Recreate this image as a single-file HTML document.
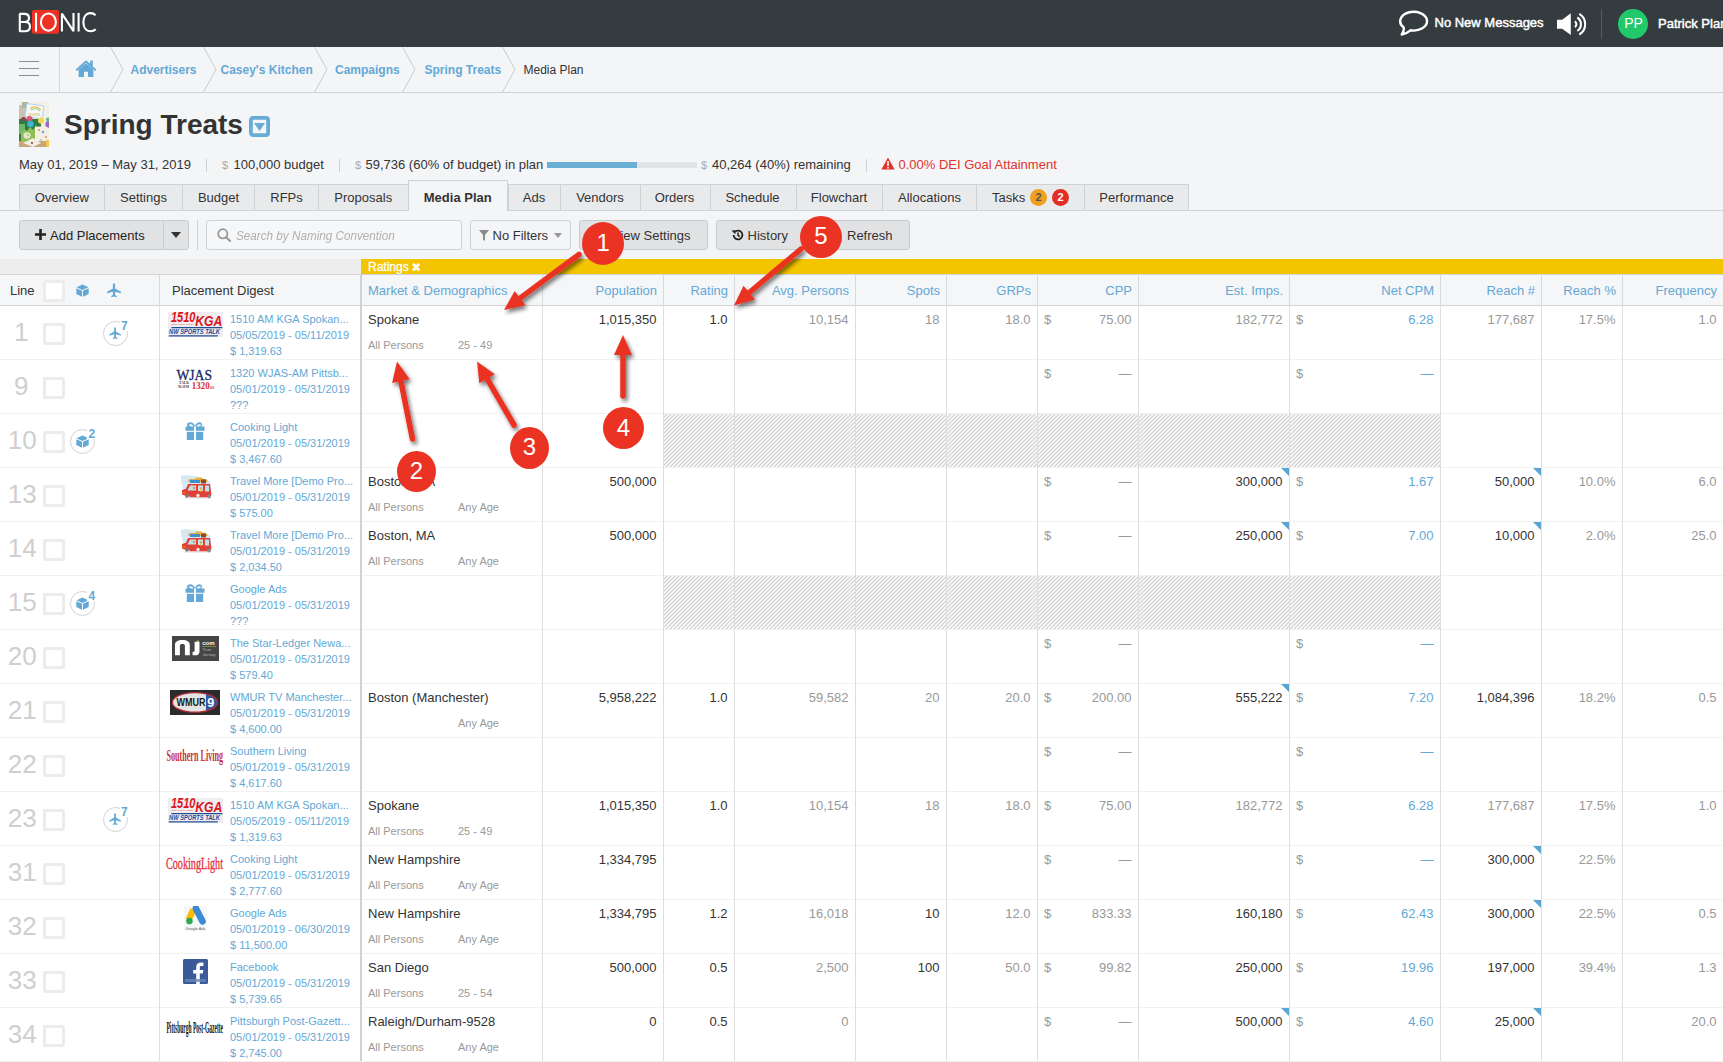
<!DOCTYPE html>
<html><head><meta charset="utf-8"><style>
html,body{margin:0;padding:0}
body{width:1723px;height:1062px;overflow:hidden;position:relative;background:#f4f5f7;font-family:"Liberation Sans",sans-serif}
.r{position:absolute}
.t{position:absolute;white-space:nowrap}
</style></head><body>
<div class="r" style="left:0px;top:0px;width:1723px;height:47px;background:#353c40"></div>
<svg class="r" style="left:0;top:0" width="110" height="47" viewBox="0 0 110 47">
<rect x="32" y="10" width="27" height="23.7" rx="2" fill="#ee3124"/>
<g fill="none" stroke="#fff" stroke-width="2.1" stroke-linejoin="bevel">
<path d="M19.8 31.2V13.9h4.6c3.2 0 4.6 1.6 4.6 4.1 0 2.4-1.6 4-4.6 4h-4.6 5c3.4 0 5.2 1.7 5.2 4.4 0 2.9-1.9 4.8-5.3 4.8z"/>
<path d="M36 12.9v18.6"/>
<ellipse cx="48.4" cy="22.1" rx="7.5" ry="8.6"/>
<path d="M61.9 31.5V13.6l11.6 17.6V12.9"/>
<path d="M78.6 12.9v18.6"/>
<path d="M95.6 15.2c-1.3-1.3-3-2.1-5-2.1-4.6 0-7.2 4-7.2 9.1 0 5.2 2.6 9.1 7.2 9.1 2.1 0 3.8-.8 5.1-2.1"/>
</g></svg>
<svg class="r" style="left:1398px;top:9px" width="33" height="28" viewBox="0 0 33 28"><path d="M12.5 21.3A13.4 9.4 0 1 0 5.6 18.4C6.2 20.5 5.5 23 3.8 25.5 7.2 25 10 23.4 12.5 21.3z" fill="none" stroke="#fff" stroke-width="2.4" stroke-linejoin="round"/></svg>
<div class="t" style="left:1434.50px;top:16.20px;font-size:13px;line-height:13px;color:#fff;-webkit-text-stroke:0.45px #fff">No New Messages</div>
<svg class="r" style="left:1550px;top:5px" width="40" height="36" viewBox="1550 5 40 36"><path d="M1557 19.7h5.2l8.6-6.4v21.7l-8.6-6.2H1557z" fill="#fff"/>
<g fill="none" stroke="#fff" stroke-width="2.1"><path d="M1574.9 21.3a3.6 3.6 0 0 1 0 5.8"/><path d="M1577.3 17.5a8 8 0 0 1 0 13.4"/><path d="M1579.3 13.9a12 12 0 0 1 0 20.6"/></g></svg>
<div class="r" style="left:1601px;top:9px;width:1px;height:30px;background:#555b60"></div>
<div class="r" style="left:1618px;top:9px;width:30px;height:30px;border-radius:50%;background:#21c96b"></div>
<div class="t" style="left:1333.50px;width:600px;text-align:center;top:15.95px;font-size:14px;line-height:14px;color:#fff;">PP</div>
<div class="t" style="left:1658.00px;top:16.50px;font-size:13px;line-height:13px;color:#fff;-webkit-text-stroke:0.45px #fff">Patrick Plan</div>
<div class="r" style="left:0px;top:47px;width:1723px;height:45px;background:#f4f5f7"></div>
<div class="r" style="left:0px;top:92px;width:1723px;height:1px;background:#cfd1d3"></div>
<div class="r" style="left:59px;top:47px;width:1px;height:45px;background:#d6d8da"></div>
<div class="r" style="left:19px;top:61px;width:20px;height:1px;background:#8c8c8c"></div>
<div class="r" style="left:19px;top:68px;width:20px;height:1px;background:#8c8c8c"></div>
<div class="r" style="left:19px;top:75px;width:20px;height:1px;background:#8c8c8c"></div>
<svg class="r" style="left:75px;top:59px" width="22" height="19" viewBox="0 0 22 19"><path d="M11 1.2L0.6 10.6l1.3 1.4L11 3.8l9.1 8.2 1.3-1.4-3.6-3.2V1.4h-2.6v3.4z" fill="#63a8d6"/><path d="M3.6 10.6L11 4.2l7.4 6.4V18h-5.4v-5.2H9V18H3.6z" fill="#63a8d6"/></svg>
<svg class="r" style="left:110px;top:47px" width="14" height="45" viewBox="0 0 14 45"><path d="M0.5 0 L13 22.5 L0.5 45" fill="none" stroke="#c9cbcd" stroke-width="1"/></svg>
<svg class="r" style="left:203px;top:47px" width="14" height="45" viewBox="0 0 14 45"><path d="M0.5 0 L13 22.5 L0.5 45" fill="none" stroke="#c9cbcd" stroke-width="1"/></svg>
<svg class="r" style="left:314px;top:47px" width="14" height="45" viewBox="0 0 14 45"><path d="M0.5 0 L13 22.5 L0.5 45" fill="none" stroke="#c9cbcd" stroke-width="1"/></svg>
<svg class="r" style="left:402px;top:47px" width="14" height="45" viewBox="0 0 14 45"><path d="M0.5 0 L13 22.5 L0.5 45" fill="none" stroke="#c9cbcd" stroke-width="1"/></svg>
<svg class="r" style="left:502px;top:47px" width="14" height="45" viewBox="0 0 14 45"><path d="M0.5 0 L13 22.5 L0.5 45" fill="none" stroke="#c9cbcd" stroke-width="1"/></svg>
<div class="t" style="left:130.50px;top:63.84px;font-size:12px;line-height:12px;color:#63a8d6;font-weight:bold;">Advertisers</div>
<div class="t" style="left:220.50px;top:63.84px;font-size:12px;line-height:12px;color:#63a8d6;font-weight:bold;">Casey's Kitchen</div>
<div class="t" style="left:335.00px;top:63.84px;font-size:12px;line-height:12px;color:#63a8d6;font-weight:bold;">Campaigns</div>
<div class="t" style="left:424.50px;top:63.84px;font-size:12px;line-height:12px;color:#63a8d6;font-weight:bold;">Spring Treats</div>
<div class="t" style="left:523.50px;top:63.84px;font-size:12px;line-height:12px;color:#333;">Media Plan</div>
<svg class="r" style="left:19px;top:102px" width="30" height="45" viewBox="0 0 30 45">
<rect width="30" height="45" fill="#f3efe6"/>
<rect x="0" y="3" width="7" height="14" fill="#c9c3b5"/>
<path d="M3 0h6v6H3z" fill="#a9b79a"/>
<path d="M8 1.5l17 2.5-2 13-17-2.5z" fill="#f4f7fb" stroke="#b9d3e8" stroke-width="1"/>
<path d="M11 6.5q6-4 11 1.5" fill="none" stroke="#f2c14e" stroke-width="1.3"/>
<path d="M12 8q5-3 9 1" fill="none" stroke="#8fcf8f" stroke-width="1"/>
<rect x="9" y="11" width="12" height="3" fill="#e9dfb8"/>
<rect x="0" y="17" width="22" height="22" fill="#2f7a48"/>
<rect x="0" y="22" width="6" height="10" fill="#66b86a"/>
<ellipse cx="10.5" cy="16.5" rx="3" ry="2.6" fill="#d9557a"/>
<ellipse cx="4.5" cy="17" rx="2.5" ry="2" fill="#9c3b4a"/>
<ellipse cx="11.5" cy="22" rx="3.2" ry="3.3" fill="#3bb6cf"/>
<ellipse cx="22" cy="18.5" rx="3" ry="3.3" fill="#efd85a"/>
<ellipse cx="29" cy="22.5" rx="2.6" ry="3.5" fill="#9b64c7"/>
<ellipse cx="29" cy="17.5" rx="2" ry="2" fill="#5fc071"/>
<path d="M2 30l3-3 3 2 3-4 3 3 3-5 2 3v13H2z" fill="#8fbf54"/>
<ellipse cx="8" cy="33.5" rx="3.6" ry="3.3" fill="#e8e4d2"/>
<circle cx="9" cy="33" r="1.1" fill="#9ccf6a"/>
<path d="M16 25l10-1 4 2v17l-8 1-6-4z" fill="#f4efe3"/>
<circle cx="24" cy="30" r="1.2" fill="#62a8da"/><circle cx="20" cy="28" r="1" fill="#e3896d"/><circle cx="27" cy="35" r="1.1" fill="#caa070"/><circle cx="22" cy="38" r="1" fill="#9ac4e0"/>
<rect x="0" y="39" width="30" height="6" fill="#c9a67a"/>
<path d="M4 41l10-5 8 5-8 4z" fill="#f2ede2"/>
<circle cx="13" cy="41" r="1.1" fill="#7a5440"/>
<rect x="27" y="38" width="3" height="7" fill="#f1c84b"/>
</svg>
<div class="t" style="left:64.00px;top:110.50px;font-size:28px;line-height:28px;color:#333;font-weight:bold;">Spring Treats</div>
<svg class="r" style="left:249px;top:116px" width="21" height="21" viewBox="0 0 21 21"><rect x="1.9" y="1.9" width="17.2" height="17.2" rx="2.2" fill="none" stroke="#67acd4" stroke-width="3.8"/><path d="M5 7h11l-5.5 8z" fill="#67acd4"/></svg>
<div class="t" style="left:19.00px;top:158.00px;font-size:13px;line-height:13px;color:#333;">May 01, 2019 – May 31, 2019</div>
<div class="r" style="left:206px;top:159px;width:1px;height:13px;background:#cfd1d3"></div>
<div class="t" style="left:222.00px;top:159.69px;font-size:11px;line-height:11px;color:#aaa;">$</div>
<div class="t" style="left:233.50px;top:158.00px;font-size:13px;line-height:13px;color:#333;">100,000 budget</div>
<div class="r" style="left:339px;top:159px;width:1px;height:13px;background:#cfd1d3"></div>
<div class="t" style="left:355.00px;top:159.69px;font-size:11px;line-height:11px;color:#aaa;">$</div>
<div class="t" style="left:365.50px;top:158.00px;font-size:13px;line-height:13px;color:#333;">59,736 (60% of budget) in plan</div>
<div class="r" style="left:547px;top:162px;width:150px;height:6px;background:#e2e3e5"></div>
<div class="r" style="left:547px;top:162px;width:90px;height:6px;background:#6aafd6"></div>
<div class="t" style="left:701.00px;top:159.69px;font-size:11px;line-height:11px;color:#aaa;">$</div>
<div class="t" style="left:712.00px;top:158.00px;font-size:13px;line-height:13px;color:#333;">40,264 (40%) remaining</div>
<div class="r" style="left:866px;top:159px;width:1px;height:13px;background:#cfd1d3"></div>
<svg class="r" style="left:881px;top:157px" width="14" height="13" viewBox="0 0 14 13"><path d="M7 0.5L13.6 12.5H0.4z" fill="#e2332b"/><rect x="6.2" y="4" width="1.6" height="5" fill="#fff"/><rect x="6.2" y="10" width="1.6" height="1.6" fill="#fff"/></svg>
<div class="t" style="left:898.50px;top:158.00px;font-size:13px;line-height:13px;color:#e2332b;">0.00% DEI Goal Attainment</div>
<div class="r" style="left:0px;top:210px;width:1723px;height:1px;background:#cfd1d3"></div>
<div class="r" style="left:19px;top:184px;width:86px;height:27px;background:#e9eaec;border:1px solid #cfd1d3;box-sizing:border-box"></div>
<div class="t" style="left:-238.25px;width:600px;text-align:center;top:190.50px;font-size:13px;line-height:13px;color:#333;">Overview</div>
<div class="r" style="left:104px;top:184px;width:79px;height:27px;background:#e9eaec;border:1px solid #cfd1d3;box-sizing:border-box"></div>
<div class="t" style="left:-156.50px;width:600px;text-align:center;top:190.50px;font-size:13px;line-height:13px;color:#333;">Settings</div>
<div class="r" style="left:182px;top:184px;width:73px;height:27px;background:#e9eaec;border:1px solid #cfd1d3;box-sizing:border-box"></div>
<div class="t" style="left:-81.50px;width:600px;text-align:center;top:190.50px;font-size:13px;line-height:13px;color:#333;">Budget</div>
<div class="r" style="left:254px;top:184px;width:65px;height:27px;background:#e9eaec;border:1px solid #cfd1d3;box-sizing:border-box"></div>
<div class="t" style="left:-13.50px;width:600px;text-align:center;top:190.50px;font-size:13px;line-height:13px;color:#333;">RFPs</div>
<div class="r" style="left:318px;top:184px;width:91px;height:27px;background:#e9eaec;border:1px solid #cfd1d3;box-sizing:border-box"></div>
<div class="t" style="left:63.25px;width:600px;text-align:center;top:190.50px;font-size:13px;line-height:13px;color:#333;">Proposals</div>
<div class="r" style="left:408px;top:180px;width:100px;height:31px;background:#f4f5f7;border:1px solid #cfd1d3;border-bottom:none;box-sizing:border-box"></div>
<div class="t" style="left:157.75px;width:600px;text-align:center;top:190.50px;font-size:13px;line-height:13px;color:#333;font-weight:bold;">Media Plan</div>
<div class="r" style="left:508px;top:184px;width:53px;height:27px;background:#e9eaec;border:1px solid #cfd1d3;box-sizing:border-box"></div>
<div class="t" style="left:234.00px;width:600px;text-align:center;top:190.50px;font-size:13px;line-height:13px;color:#333;">Ads</div>
<div class="r" style="left:560px;top:184px;width:81px;height:27px;background:#e9eaec;border:1px solid #cfd1d3;box-sizing:border-box"></div>
<div class="t" style="left:300.00px;width:600px;text-align:center;top:190.50px;font-size:13px;line-height:13px;color:#333;">Vendors</div>
<div class="r" style="left:640px;top:184px;width:71px;height:27px;background:#e9eaec;border:1px solid #cfd1d3;box-sizing:border-box"></div>
<div class="t" style="left:374.50px;width:600px;text-align:center;top:190.50px;font-size:13px;line-height:13px;color:#333;">Orders</div>
<div class="r" style="left:710px;top:184px;width:87px;height:27px;background:#e9eaec;border:1px solid #cfd1d3;box-sizing:border-box"></div>
<div class="t" style="left:452.50px;width:600px;text-align:center;top:190.50px;font-size:13px;line-height:13px;color:#333;">Schedule</div>
<div class="r" style="left:796px;top:184px;width:87px;height:27px;background:#e9eaec;border:1px solid #cfd1d3;box-sizing:border-box"></div>
<div class="t" style="left:539.00px;width:600px;text-align:center;top:190.50px;font-size:13px;line-height:13px;color:#333;">Flowchart</div>
<div class="r" style="left:882px;top:184px;width:95px;height:27px;background:#e9eaec;border:1px solid #cfd1d3;box-sizing:border-box"></div>
<div class="t" style="left:629.50px;width:600px;text-align:center;top:190.50px;font-size:13px;line-height:13px;color:#333;">Allocations</div>
<div class="r" style="left:976px;top:184px;width:109px;height:27px;background:#e9eaec;border:1px solid #cfd1d3;box-sizing:border-box"></div>
<div class="t" style="left:992.00px;top:190.50px;font-size:13px;line-height:13px;color:#333;">Tasks</div>
<div class="r" style="left:1030px;top:189px;width:17px;height:17px;border-radius:50%;background:#f0a01e"></div>
<div class="t" style="left:738.50px;width:600px;text-align:center;top:192.19px;font-size:11px;line-height:11px;color:#555;font-weight:bold;">2</div>
<div class="r" style="left:1052px;top:189px;width:17px;height:17px;border-radius:50%;background:#e32d25"></div>
<div class="t" style="left:760.50px;width:600px;text-align:center;top:192.19px;font-size:11px;line-height:11px;color:#fff;font-weight:bold;">2</div>
<div class="r" style="left:1084px;top:184px;width:105px;height:27px;background:#e9eaec;border:1px solid #cfd1d3;box-sizing:border-box"></div>
<div class="t" style="left:836.50px;width:600px;text-align:center;top:190.50px;font-size:13px;line-height:13px;color:#333;">Performance</div>
<div class="r" style="left:19px;top:220px;width:170px;height:30px;background:#e1e2e4;border:1px solid #c9cbcd;border-radius:3px;box-sizing:border-box"></div>
<div class="r" style="left:163px;top:221px;width:1px;height:28px;background:#c9cbcd"></div>
<svg class="r" style="left:35px;top:229px" width="11" height="11" viewBox="0 0 11 11"><path d="M4.2 0h2.6v4.2H11v2.6H6.8V11H4.2V6.8H0V4.2h4.2z" fill="#222"/></svg>
<div class="t" style="left:50.00px;top:228.50px;font-size:13px;line-height:13px;color:#222;">Add Placements</div>
<svg class="r" style="left:171px;top:232px" width="10" height="6" viewBox="0 0 10 6"><path d="M0 0h10L5 6z" fill="#333"/></svg>
<div class="r" style="left:197px;top:220px;width:1px;height:30px;background:#cfd1d3"></div>
<div class="r" style="left:206px;top:220px;width:256px;height:30px;background:#f6f7f8;border:1px solid #cfd1d3;border-radius:3px;box-sizing:border-box"></div>
<svg class="r" style="left:217px;top:228px" width="14" height="14" viewBox="0 0 14 14"><circle cx="5.8" cy="5.8" r="4.6" fill="none" stroke="#999" stroke-width="1.8"/><path d="M9.2 9.2L13 13" stroke="#999" stroke-width="2.2" stroke-linecap="round"/></svg>
<div class="t" style="left:235.50px;top:228.50px;font-size:13px;line-height:13px;color:#b0b0b0;font-style:italic;transform:scaleX(0.9);transform-origin:0 0">Search by Naming Convention</div>
<div class="r" style="left:470px;top:220px;width:101px;height:30px;background:#f4f5f7;border:1px solid #cfd1d3;border-radius:3px;box-sizing:border-box"></div>
<svg class="r" style="left:479px;top:230px" width="10" height="11" viewBox="0 0 10 11"><path d="M0 0h10L6 5v6L4 9.5V5z" fill="#8a8a8a"/></svg>
<div class="t" style="left:492.50px;top:228.50px;font-size:13px;line-height:13px;color:#333;">No Filters</div>
<svg class="r" style="left:554px;top:233px" width="8" height="5" viewBox="0 0 8 5"><path d="M0 0h8L4 5z" fill="#999"/></svg>
<div class="r" style="left:579px;top:220px;width:129px;height:30px;background:#e1e2e4;border:1px solid #c9cbcd;border-radius:3px;box-sizing:border-box"></div>
<div class="t" style="left:612.00px;top:228.50px;font-size:13px;line-height:13px;color:#333;">View Settings</div>
<div class="r" style="left:716px;top:220px;width:194px;height:30px;background:#e1e2e4;border:1px solid #c9cbcd;border-radius:3px;box-sizing:border-box"></div>
<svg class="r" style="left:731px;top:229px" width="13" height="12" viewBox="0 0 13 12"><path d="M2.6 6a4.4 4.4 0 1 0 1.3-3.1" fill="none" stroke="#222" stroke-width="1.8"/><path d="M0.5 1.5L4.6 1.2 4.3 5.3z" fill="#222"/><path d="M7 3.6V6.3l1.8 1.4" fill="none" stroke="#222" stroke-width="1.5"/></svg>
<div class="t" style="left:747.50px;top:228.50px;font-size:13px;line-height:13px;color:#333;">History</div>
<div class="r" style="left:828px;top:221px;width:1px;height:28px;background:#c9cbcd"></div>
<div class="t" style="left:847.00px;top:228.50px;font-size:13px;line-height:13px;color:#333;">Refresh</div>
<div class="r" style="left:0px;top:259px;width:1723px;height:15px;background:#ededee"></div>
<div class="r" style="left:361px;top:259px;width:1362px;height:15px;background:#f2c500"></div>
<div class="t" style="left:368.00px;top:260.84px;font-size:12px;line-height:12px;color:#fff;-webkit-text-stroke:0.3px #fff">Ratings</div>
<svg class="r" style="left:411px;top:262px" width="10" height="10" viewBox="0 0 10 10"><path d="M2.8 2.8l4.6 4.6M7.4 2.8l-4.6 4.6" stroke="#fff" stroke-width="3" stroke-linecap="round"/></svg>
<div class="r" style="left:0px;top:274px;width:1723px;height:32px;background:#f5f6f7;border-top:1px solid #d3d3d3;border-bottom:1px solid #d3d3d3;box-sizing:border-box"></div>
<div class="t" style="left:10.00px;top:284.00px;font-size:13px;line-height:13px;color:#333;">Line</div>
<div class="r" style="left:43px;top:280px;width:22px;height:22px;background:#fff;border:3px solid #ececec;border-radius:2px;box-sizing:border-box"></div>
<svg class="r" style="left:76px;top:284px" width="13" height="13" viewBox="0 0 13 13"><path d="M6.5 0.5L12.5 3.2 6.5 5.9 0.5 3.2z" fill="#63a8d6"/><path d="M0.3 4.2L6 6.8V12.7L0.3 10z" fill="#63a8d6"/><path d="M12.7 4.2L7 6.8V12.7L12.7 10z" fill="#63a8d6"/></svg>
<svg class="r" style="left:107px;top:283px" width="14" height="15" viewBox="0 0 14 15"><path d="M7 0.2c.7 0 1.1.8 1.1 1.8v3.5l5.8 3.3v1.5l-5.8-1.6v3.2l1.6 1.2v1.2L7 13.6l-2.7.7v-1.2l1.6-1.2V8.7L0.1 10.3V8.8l5.8-3.3V2c0-1 .4-1.8 1.1-1.8z" fill="#63a8d6"/></svg>
<div class="t" style="left:172.00px;top:284.00px;font-size:13px;line-height:13px;color:#333;">Placement Digest</div>
<div class="t" style="left:368.00px;top:284.00px;font-size:13px;line-height:13px;color:#63a8d6;">Market &amp; Demographics</div>
<div class="t" style="right:1066.00px;top:284.00px;font-size:13px;line-height:13px;color:#63a8d6;">Population</div>
<div class="t" style="right:995.00px;top:284.00px;font-size:13px;line-height:13px;color:#63a8d6;">Rating</div>
<div class="t" style="right:874.00px;top:284.00px;font-size:13px;line-height:13px;color:#63a8d6;">Avg. Persons</div>
<div class="t" style="right:783.00px;top:284.00px;font-size:13px;line-height:13px;color:#63a8d6;">Spots</div>
<div class="t" style="right:692.00px;top:284.00px;font-size:13px;line-height:13px;color:#63a8d6;">GRPs</div>
<div class="t" style="right:591.00px;top:284.00px;font-size:13px;line-height:13px;color:#63a8d6;">CPP</div>
<div class="t" style="right:440.00px;top:284.00px;font-size:13px;line-height:13px;color:#63a8d6;">Est. Imps.</div>
<div class="t" style="right:289.00px;top:284.00px;font-size:13px;line-height:13px;color:#63a8d6;">Net CPM</div>
<div class="t" style="right:188.00px;top:284.00px;font-size:13px;line-height:13px;color:#63a8d6;">Reach #</div>
<div class="t" style="right:107.00px;top:284.00px;font-size:13px;line-height:13px;color:#63a8d6;">Reach %</div>
<div class="t" style="right:6.00px;top:284.00px;font-size:13px;line-height:13px;color:#63a8d6;">Frequency</div>
<div class="r" style="left:159px;top:274px;width:1px;height:31px;background:#d8dadc"></div>
<div class="r" style="left:360px;top:274px;width:2px;height:31px;background:#d0d2d4"></div>
<div class="r" style="left:542px;top:274px;width:1px;height:31px;background:#d8dadc"></div>
<div class="r" style="left:663px;top:274px;width:1px;height:31px;background:#d8dadc"></div>
<div class="r" style="left:734px;top:274px;width:1px;height:31px;background:#d8dadc"></div>
<div class="r" style="left:855px;top:274px;width:1px;height:31px;background:#d8dadc"></div>
<div class="r" style="left:946px;top:274px;width:1px;height:31px;background:#d8dadc"></div>
<div class="r" style="left:1037px;top:274px;width:1px;height:31px;background:#d8dadc"></div>
<div class="r" style="left:1138px;top:274px;width:1px;height:31px;background:#d8dadc"></div>
<div class="r" style="left:1289px;top:274px;width:1px;height:31px;background:#d8dadc"></div>
<div class="r" style="left:1440px;top:274px;width:1px;height:31px;background:#d8dadc"></div>
<div class="r" style="left:1541px;top:274px;width:1px;height:31px;background:#d8dadc"></div>
<div class="r" style="left:1622px;top:274px;width:1px;height:31px;background:#d8dadc"></div>
<div class="r" style="left:0px;top:306px;width:1723px;height:53px;background:#fff"></div>
<div class="r" style="left:0px;top:359px;width:1723px;height:1px;background:#f1f1f1"></div>
<div class="r" style="left:159px;top:305px;width:1px;height:54px;background:#dedede"></div>
<div class="r" style="left:360px;top:305px;width:2px;height:54px;background:#d0d2d4"></div>
<div class="r" style="left:542px;top:305px;width:1px;height:54px;background:#dedede"></div>
<div class="r" style="left:663px;top:305px;width:1px;height:54px;background:#dedede"></div>
<div class="r" style="left:734px;top:305px;width:1px;height:54px;background:#dedede"></div>
<div class="r" style="left:855px;top:305px;width:1px;height:54px;background:#dedede"></div>
<div class="r" style="left:946px;top:305px;width:1px;height:54px;background:#dedede"></div>
<div class="r" style="left:1037px;top:305px;width:1px;height:54px;background:#dedede"></div>
<div class="r" style="left:1138px;top:305px;width:1px;height:54px;background:#dedede"></div>
<div class="r" style="left:1289px;top:305px;width:1px;height:54px;background:#dedede"></div>
<div class="r" style="left:1440px;top:305px;width:1px;height:54px;background:#dedede"></div>
<div class="r" style="left:1541px;top:305px;width:1px;height:54px;background:#dedede"></div>
<div class="r" style="left:1622px;top:305px;width:1px;height:54px;background:#dedede"></div>
<div class="t" style="left:-278.70px;width:600px;text-align:center;top:318.99px;font-size:26px;line-height:26px;color:#cfcfcf;">1</div>
<div class="r" style="left:43px;top:323px;width:22px;height:22px;background:#fff;border:3px solid #ececec;border-radius:2px;box-sizing:border-box"></div>
<div class="r" style="left:102.5px;top:321.3px;width:25px;height:25px;border-radius:50%;border:1px solid #d2d2d2;box-sizing:border-box"></div>
<svg class="r" style="left:108.9px;top:326.90000000000003px" width="12.2" height="12.6" viewBox="0 0 14 15"><path d="M7 0.2c.7 0 1.1.8 1.1 1.8v3.5l5.8 3.3v1.5l-5.8-1.6v3.2l1.6 1.2v1.2L7 13.6l-2.7.7v-1.2l1.6-1.2V8.7L0.1 10.3V8.8l5.8-3.3V2c0-1 .4-1.8 1.1-1.8z" fill="#63a8d6"/></svg>
<div class="r" style="left:119.5px;top:320.3px;width:10px;height:11px;background:#fff"></div>
<div class="t" style="left:121.10px;top:320.34px;font-size:12px;line-height:12px;color:#63a8d6;font-weight:bold;">7</div>
<svg class="r" style="left:168px;top:312px" width="55" height="25" viewBox="0 0 55 25"><rect width="55" height="25" fill="#efedee"/>
<text x="3" y="10.4" font-family="Liberation Sans" font-weight="bold" font-style="italic" font-size="14" fill="#e0141e" textLength="24.5" lengthAdjust="spacingAndGlyphs">1510</text>
<text x="3.5" y="13" font-family="Liberation Sans" font-weight="bold" font-size="2.4" fill="#e0141e" opacity="0.6" textLength="22" lengthAdjust="spacingAndGlyphs">SPOKANE</text>
<text x="27.3" y="14" font-family="Liberation Sans" font-weight="bold" font-style="italic" font-size="14.5" fill="#d9141f" textLength="27" lengthAdjust="spacingAndGlyphs">KGA</text>
<path d="M3.5 15h51l-0.3 1.3h-51z" fill="#1f4e99"/>
<text x="1" y="22.3" font-family="Liberation Sans" font-weight="bold" font-style="italic" font-size="7.2" fill="#1d4a96" textLength="51" lengthAdjust="spacingAndGlyphs">NW SPORTS TALK</text>
<path d="M1 23.3h49l-0.4 1.3h-49z" fill="#1f4e99"/></svg>
<div class="t" style="left:230.00px;top:313.69px;font-size:11px;line-height:11px;color:#63a8d6;">1510 AM KGA Spokan...</div>
<div class="t" style="left:230.00px;top:329.69px;font-size:11px;line-height:11px;color:#63a8d6;">05/05/2019 - 05/11/2019</div>
<div class="t" style="left:230.00px;top:345.69px;font-size:11px;line-height:11px;color:#63a8d6;">$ 1,319.63</div>
<div class="t" style="left:368.00px;top:312.50px;font-size:13px;line-height:13px;color:#333;">Spokane</div>
<div class="t" style="left:368.00px;top:340.19px;font-size:11px;line-height:11px;color:#999;">All Persons</div>
<div class="t" style="left:458.00px;top:340.19px;font-size:11px;line-height:11px;color:#999;">25 - 49</div>
<div class="t" style="right:1066.50px;top:312.50px;font-size:13px;line-height:13px;color:#333;">1,015,350</div>
<div class="t" style="right:995.50px;top:312.50px;font-size:13px;line-height:13px;color:#333;">1.0</div>
<div class="t" style="right:874.50px;top:312.50px;font-size:13px;line-height:13px;color:#999;">10,154</div>
<div class="t" style="right:783.50px;top:312.50px;font-size:13px;line-height:13px;color:#999;">18</div>
<div class="t" style="right:692.50px;top:312.50px;font-size:13px;line-height:13px;color:#999;">18.0</div>
<div class="t" style="left:1044.00px;top:312.50px;font-size:13px;line-height:13px;color:#999;">$</div>
<div class="t" style="right:591.50px;top:312.50px;font-size:13px;line-height:13px;color:#999;">75.00</div>
<div class="t" style="right:440.50px;top:312.50px;font-size:13px;line-height:13px;color:#999;">182,772</div>
<div class="t" style="left:1296.00px;top:312.50px;font-size:13px;line-height:13px;color:#999;">$</div>
<div class="t" style="right:289.50px;top:312.50px;font-size:13px;line-height:13px;color:#63a8d6;">6.28</div>
<div class="t" style="right:188.50px;top:312.50px;font-size:13px;line-height:13px;color:#999;">177,687</div>
<div class="t" style="right:107.50px;top:312.50px;font-size:13px;line-height:13px;color:#999;">17.5%</div>
<div class="t" style="right:6.50px;top:312.50px;font-size:13px;line-height:13px;color:#999;">1.0</div>
<div class="r" style="left:0px;top:360px;width:1723px;height:53px;background:#fff"></div>
<div class="r" style="left:0px;top:413px;width:1723px;height:1px;background:#f1f1f1"></div>
<div class="r" style="left:159px;top:359px;width:1px;height:54px;background:#dedede"></div>
<div class="r" style="left:360px;top:359px;width:2px;height:54px;background:#d0d2d4"></div>
<div class="r" style="left:542px;top:359px;width:1px;height:54px;background:#dedede"></div>
<div class="r" style="left:663px;top:359px;width:1px;height:54px;background:#dedede"></div>
<div class="r" style="left:734px;top:359px;width:1px;height:54px;background:#dedede"></div>
<div class="r" style="left:855px;top:359px;width:1px;height:54px;background:#dedede"></div>
<div class="r" style="left:946px;top:359px;width:1px;height:54px;background:#dedede"></div>
<div class="r" style="left:1037px;top:359px;width:1px;height:54px;background:#dedede"></div>
<div class="r" style="left:1138px;top:359px;width:1px;height:54px;background:#dedede"></div>
<div class="r" style="left:1289px;top:359px;width:1px;height:54px;background:#dedede"></div>
<div class="r" style="left:1440px;top:359px;width:1px;height:54px;background:#dedede"></div>
<div class="r" style="left:1541px;top:359px;width:1px;height:54px;background:#dedede"></div>
<div class="r" style="left:1622px;top:359px;width:1px;height:54px;background:#dedede"></div>
<div class="t" style="left:-278.70px;width:600px;text-align:center;top:372.99px;font-size:26px;line-height:26px;color:#cfcfcf;">9</div>
<div class="r" style="left:43px;top:377px;width:22px;height:22px;background:#fff;border:3px solid #ececec;border-radius:2px;box-sizing:border-box"></div>
<svg class="r" style="left:176px;top:368px" width="40" height="23" viewBox="0 0 40 23">
<text x="0.5" y="11.6" font-family="Liberation Serif" font-size="15" fill="#232a6a" stroke="#232a6a" stroke-width="0.35" textLength="35.5" lengthAdjust="spacingAndGlyphs">WJAS</text>
<text x="15.8" y="20.8" font-family="Liberation Serif" font-weight="bold" font-size="11" fill="#d9303e" textLength="18" lengthAdjust="spacingAndGlyphs">1320</text>
<text x="34" y="20.8" font-family="Liberation Sans" font-size="3" fill="#d9303e">AM</text>
<text x="3" y="16" font-family="Liberation Serif" font-weight="bold" font-size="3.6" fill="#444" textLength="10" lengthAdjust="spacingAndGlyphs">TALK</text>
<text x="2" y="20" font-family="Liberation Serif" font-weight="bold" font-size="3.6" fill="#444" textLength="11" lengthAdjust="spacingAndGlyphs">96.1FM</text></svg>
<div class="t" style="left:230.00px;top:367.69px;font-size:11px;line-height:11px;color:#63a8d6;">1320 WJAS-AM Pittsb...</div>
<div class="t" style="left:230.00px;top:383.69px;font-size:11px;line-height:11px;color:#63a8d6;">05/01/2019 - 05/31/2019</div>
<div class="t" style="left:230.00px;top:399.69px;font-size:11px;line-height:11px;color:#63a8d6;">???</div>
<div class="t" style="left:1044.00px;top:366.50px;font-size:13px;line-height:13px;color:#999;">$</div>
<div class="t" style="right:591.50px;top:366.50px;font-size:13px;line-height:13px;color:#999;">—</div>
<div class="t" style="left:1296.00px;top:366.50px;font-size:13px;line-height:13px;color:#999;">$</div>
<div class="t" style="right:289.50px;top:366.50px;font-size:13px;line-height:13px;color:#63a8d6;">—</div>
<div class="r" style="left:0px;top:414px;width:1723px;height:53px;background:#fff"></div>
<svg class="r" style="left:663px;top:414px" width="777" height="53"><defs><pattern id="hp2" width="4" height="4" patternUnits="userSpaceOnUse"><path d="M-1 1L1 -1M0 4L4 0M3 5L5 3" stroke="#d2d2d2" stroke-width="1.3"/></pattern></defs><rect width="777" height="53" fill="url(#hp2)"/></svg>
<div class="r" style="left:0px;top:467px;width:1723px;height:1px;background:#f1f1f1"></div>
<div class="r" style="left:159px;top:413px;width:1px;height:54px;background:#dedede"></div>
<div class="r" style="left:360px;top:413px;width:2px;height:54px;background:#d0d2d4"></div>
<div class="r" style="left:542px;top:413px;width:1px;height:54px;background:#dedede"></div>
<div class="r" style="left:663px;top:413px;width:1px;height:54px;background:#dedede"></div>
<div class="r" style="left:734px;top:413px;width:1px;height:54px;background:#dedede"></div>
<div class="r" style="left:855px;top:413px;width:1px;height:54px;background:#dedede"></div>
<div class="r" style="left:946px;top:413px;width:1px;height:54px;background:#dedede"></div>
<div class="r" style="left:1037px;top:413px;width:1px;height:54px;background:#dedede"></div>
<div class="r" style="left:1138px;top:413px;width:1px;height:54px;background:#dedede"></div>
<div class="r" style="left:1289px;top:413px;width:1px;height:54px;background:#dedede"></div>
<div class="r" style="left:1440px;top:413px;width:1px;height:54px;background:#dedede"></div>
<div class="r" style="left:1541px;top:413px;width:1px;height:54px;background:#dedede"></div>
<div class="r" style="left:1622px;top:413px;width:1px;height:54px;background:#dedede"></div>
<div class="t" style="left:-277.70px;width:600px;text-align:center;top:426.99px;font-size:26px;line-height:26px;color:#cfcfcf;">10</div>
<div class="r" style="left:43px;top:431px;width:22px;height:22px;background:#fff;border:3px solid #ececec;border-radius:2px;box-sizing:border-box"></div>
<div class="r" style="left:70px;top:429px;width:25px;height:25px;border-radius:50%;border:1px solid #d2d2d2;box-sizing:border-box"></div>
<svg class="r" style="left:76px;top:435px" width="13" height="13" viewBox="0 0 13 13"><path d="M6.5 0.5L12.5 3.2 6.5 5.9 0.5 3.2z" fill="#63a8d6"/><path d="M0.3 4.2L6 6.8V12.7L0.3 10z" fill="#63a8d6"/><path d="M12.7 4.2L7 6.8V12.7L12.7 10z" fill="#63a8d6"/></svg>
<div class="r" style="left:87px;top:428px;width:10px;height:11px;background:#fff"></div>
<div class="t" style="left:88.60px;top:428.04px;font-size:12px;line-height:12px;color:#63a8d6;font-weight:bold;">2</div>
<svg class="r" style="left:184px;top:421px" width="22" height="20" viewBox="0 0 22 20"><path d="M6.5 1.2c1.8 0 3.5 1.6 4.5 3.6 1-2 2.7-3.6 4.5-3.6 1.5 0 2.5 1 2.5 2.2 0 .9-.5 1.6-1.2 2.1H20.5v4.2H1.5V5.5H4.2C3.5 5 3 4.3 3 3.4 3 2.2 4.3 1.2 6.5 1.2zm0 2c-.9 0-1.4.3-1.4.8s.8 1.3 2.5 1.5H9.6C8.8 4.1 7.6 3.2 6.5 3.2zm9 0c-1.1 0-2.3.9-3.1 2.3h2c1.7-.2 2.5-1 2.5-1.5s-.5-.8-1.4-.8z" fill="#63a8d6"/><rect x="2.8" y="10.8" width="16.4" height="8.2" fill="#63a8d6"/><rect x="10" y="5.5" width="2" height="13.5" fill="#fff"/></svg>
<div class="t" style="left:230.00px;top:421.69px;font-size:11px;line-height:11px;color:#63a8d6;">Cooking Light</div>
<div class="t" style="left:230.00px;top:437.69px;font-size:11px;line-height:11px;color:#63a8d6;">05/01/2019 - 05/31/2019</div>
<div class="t" style="left:230.00px;top:453.69px;font-size:11px;line-height:11px;color:#63a8d6;">$ 3,467.60</div>
<div class="r" style="left:0px;top:468px;width:1723px;height:53px;background:#fff"></div>
<div class="r" style="left:0px;top:521px;width:1723px;height:1px;background:#f1f1f1"></div>
<div class="r" style="left:159px;top:467px;width:1px;height:54px;background:#dedede"></div>
<div class="r" style="left:360px;top:467px;width:2px;height:54px;background:#d0d2d4"></div>
<div class="r" style="left:542px;top:467px;width:1px;height:54px;background:#dedede"></div>
<div class="r" style="left:663px;top:467px;width:1px;height:54px;background:#dedede"></div>
<div class="r" style="left:734px;top:467px;width:1px;height:54px;background:#dedede"></div>
<div class="r" style="left:855px;top:467px;width:1px;height:54px;background:#dedede"></div>
<div class="r" style="left:946px;top:467px;width:1px;height:54px;background:#dedede"></div>
<div class="r" style="left:1037px;top:467px;width:1px;height:54px;background:#dedede"></div>
<div class="r" style="left:1138px;top:467px;width:1px;height:54px;background:#dedede"></div>
<div class="r" style="left:1289px;top:467px;width:1px;height:54px;background:#dedede"></div>
<div class="r" style="left:1440px;top:467px;width:1px;height:54px;background:#dedede"></div>
<div class="r" style="left:1541px;top:467px;width:1px;height:54px;background:#dedede"></div>
<div class="r" style="left:1622px;top:467px;width:1px;height:54px;background:#dedede"></div>
<div class="t" style="left:-277.70px;width:600px;text-align:center;top:480.99px;font-size:26px;line-height:26px;color:#cfcfcf;">13</div>
<div class="r" style="left:43px;top:485px;width:22px;height:22px;background:#fff;border:3px solid #ececec;border-radius:2px;box-sizing:border-box"></div>
<svg class="r" style="left:178px;top:474px" width="35" height="25" viewBox="0 0 35 25">
<path d="M3 1.5C9 0.5 22 2 30 6c3 2 4 6 1 9l-3 2-22-1C4 12 2.5 6 3 1.5z" fill="#d7e8f2"/>
<path d="M11 5h6l1-1.5h5l2 1.5h3l2 3H10z" fill="#e8b23a"/>
<rect x="12" y="6" width="10" height="3" fill="#3d8fd1"/>
<rect x="23" y="5.5" width="5" height="4" fill="#8a4b2e"/>
<path d="M10 10h22l1.5 11-2 2.5H12l-1-2H6.5L4 20.5V16l4-1.2z" fill="#e04038"/>
<path d="M12 11.5h6v5H9.5z" fill="#bfe3e6"/><path d="M20 11.5h5v5.5h-5z" fill="#c9e6e0"/><path d="M27 11.5h4v6h-4z" fill="#bfe3e6"/>
<circle cx="16" cy="14" r="1.3" fill="#d9956e"/><circle cx="23" cy="14.5" r="1.3" fill="#e0a070"/><rect x="22" y="15" width="2" height="2.5" fill="#f2c14e"/>
<rect x="4.5" y="18" width="3" height="1.6" fill="#f37021"/>
<circle cx="9" cy="22" r="1.9" fill="#777"/><circle cx="20" cy="21.5" r="1.7" fill="#eee"/><circle cx="31" cy="22.5" r="1.9" fill="#888"/>
<ellipse cx="18" cy="24" rx="13" ry="1" fill="#ddd" opacity=".6"/></svg>
<div class="t" style="left:230.00px;top:475.69px;font-size:11px;line-height:11px;color:#63a8d6;">Travel More [Demo Pro...</div>
<div class="t" style="left:230.00px;top:491.69px;font-size:11px;line-height:11px;color:#63a8d6;">05/01/2019 - 05/31/2019</div>
<div class="t" style="left:230.00px;top:507.69px;font-size:11px;line-height:11px;color:#63a8d6;">$ 575.00</div>
<div class="t" style="left:368.00px;top:474.50px;font-size:13px;line-height:13px;color:#333;">Boston, MA</div>
<div class="t" style="left:368.00px;top:502.19px;font-size:11px;line-height:11px;color:#999;">All Persons</div>
<div class="t" style="left:458.00px;top:502.19px;font-size:11px;line-height:11px;color:#999;">Any Age</div>
<div class="t" style="right:1066.50px;top:474.50px;font-size:13px;line-height:13px;color:#333;">500,000</div>
<div class="t" style="left:1044.00px;top:474.50px;font-size:13px;line-height:13px;color:#999;">$</div>
<div class="t" style="right:591.50px;top:474.50px;font-size:13px;line-height:13px;color:#999;">—</div>
<div class="t" style="right:440.50px;top:474.50px;font-size:13px;line-height:13px;color:#333;">300,000</div>
<svg class="r" style="left:1281px;top:468px" width="8" height="8" viewBox="0 0 8 8"><path d="M0 0h8v8z" fill="#5aa5d6"/></svg>
<div class="t" style="left:1296.00px;top:474.50px;font-size:13px;line-height:13px;color:#999;">$</div>
<div class="t" style="right:289.50px;top:474.50px;font-size:13px;line-height:13px;color:#63a8d6;">1.67</div>
<div class="t" style="right:188.50px;top:474.50px;font-size:13px;line-height:13px;color:#333;">50,000</div>
<svg class="r" style="left:1533px;top:468px" width="8" height="8" viewBox="0 0 8 8"><path d="M0 0h8v8z" fill="#5aa5d6"/></svg>
<div class="t" style="right:107.50px;top:474.50px;font-size:13px;line-height:13px;color:#999;">10.0%</div>
<div class="t" style="right:6.50px;top:474.50px;font-size:13px;line-height:13px;color:#999;">6.0</div>
<div class="r" style="left:0px;top:522px;width:1723px;height:53px;background:#fff"></div>
<div class="r" style="left:0px;top:575px;width:1723px;height:1px;background:#f1f1f1"></div>
<div class="r" style="left:159px;top:521px;width:1px;height:54px;background:#dedede"></div>
<div class="r" style="left:360px;top:521px;width:2px;height:54px;background:#d0d2d4"></div>
<div class="r" style="left:542px;top:521px;width:1px;height:54px;background:#dedede"></div>
<div class="r" style="left:663px;top:521px;width:1px;height:54px;background:#dedede"></div>
<div class="r" style="left:734px;top:521px;width:1px;height:54px;background:#dedede"></div>
<div class="r" style="left:855px;top:521px;width:1px;height:54px;background:#dedede"></div>
<div class="r" style="left:946px;top:521px;width:1px;height:54px;background:#dedede"></div>
<div class="r" style="left:1037px;top:521px;width:1px;height:54px;background:#dedede"></div>
<div class="r" style="left:1138px;top:521px;width:1px;height:54px;background:#dedede"></div>
<div class="r" style="left:1289px;top:521px;width:1px;height:54px;background:#dedede"></div>
<div class="r" style="left:1440px;top:521px;width:1px;height:54px;background:#dedede"></div>
<div class="r" style="left:1541px;top:521px;width:1px;height:54px;background:#dedede"></div>
<div class="r" style="left:1622px;top:521px;width:1px;height:54px;background:#dedede"></div>
<div class="t" style="left:-277.70px;width:600px;text-align:center;top:534.99px;font-size:26px;line-height:26px;color:#cfcfcf;">14</div>
<div class="r" style="left:43px;top:539px;width:22px;height:22px;background:#fff;border:3px solid #ececec;border-radius:2px;box-sizing:border-box"></div>
<svg class="r" style="left:178px;top:528px" width="35" height="25" viewBox="0 0 35 25">
<path d="M3 1.5C9 0.5 22 2 30 6c3 2 4 6 1 9l-3 2-22-1C4 12 2.5 6 3 1.5z" fill="#d7e8f2"/>
<path d="M11 5h6l1-1.5h5l2 1.5h3l2 3H10z" fill="#e8b23a"/>
<rect x="12" y="6" width="10" height="3" fill="#3d8fd1"/>
<rect x="23" y="5.5" width="5" height="4" fill="#8a4b2e"/>
<path d="M10 10h22l1.5 11-2 2.5H12l-1-2H6.5L4 20.5V16l4-1.2z" fill="#e04038"/>
<path d="M12 11.5h6v5H9.5z" fill="#bfe3e6"/><path d="M20 11.5h5v5.5h-5z" fill="#c9e6e0"/><path d="M27 11.5h4v6h-4z" fill="#bfe3e6"/>
<circle cx="16" cy="14" r="1.3" fill="#d9956e"/><circle cx="23" cy="14.5" r="1.3" fill="#e0a070"/><rect x="22" y="15" width="2" height="2.5" fill="#f2c14e"/>
<rect x="4.5" y="18" width="3" height="1.6" fill="#f37021"/>
<circle cx="9" cy="22" r="1.9" fill="#777"/><circle cx="20" cy="21.5" r="1.7" fill="#eee"/><circle cx="31" cy="22.5" r="1.9" fill="#888"/>
<ellipse cx="18" cy="24" rx="13" ry="1" fill="#ddd" opacity=".6"/></svg>
<div class="t" style="left:230.00px;top:529.69px;font-size:11px;line-height:11px;color:#63a8d6;">Travel More [Demo Pro...</div>
<div class="t" style="left:230.00px;top:545.69px;font-size:11px;line-height:11px;color:#63a8d6;">05/01/2019 - 05/31/2019</div>
<div class="t" style="left:230.00px;top:561.69px;font-size:11px;line-height:11px;color:#63a8d6;">$ 2,034.50</div>
<div class="t" style="left:368.00px;top:528.50px;font-size:13px;line-height:13px;color:#333;">Boston, MA</div>
<div class="t" style="left:368.00px;top:556.19px;font-size:11px;line-height:11px;color:#999;">All Persons</div>
<div class="t" style="left:458.00px;top:556.19px;font-size:11px;line-height:11px;color:#999;">Any Age</div>
<div class="t" style="right:1066.50px;top:528.50px;font-size:13px;line-height:13px;color:#333;">500,000</div>
<div class="t" style="left:1044.00px;top:528.50px;font-size:13px;line-height:13px;color:#999;">$</div>
<div class="t" style="right:591.50px;top:528.50px;font-size:13px;line-height:13px;color:#999;">—</div>
<div class="t" style="right:440.50px;top:528.50px;font-size:13px;line-height:13px;color:#333;">250,000</div>
<svg class="r" style="left:1281px;top:522px" width="8" height="8" viewBox="0 0 8 8"><path d="M0 0h8v8z" fill="#5aa5d6"/></svg>
<div class="t" style="left:1296.00px;top:528.50px;font-size:13px;line-height:13px;color:#999;">$</div>
<div class="t" style="right:289.50px;top:528.50px;font-size:13px;line-height:13px;color:#63a8d6;">7.00</div>
<div class="t" style="right:188.50px;top:528.50px;font-size:13px;line-height:13px;color:#333;">10,000</div>
<svg class="r" style="left:1533px;top:522px" width="8" height="8" viewBox="0 0 8 8"><path d="M0 0h8v8z" fill="#5aa5d6"/></svg>
<div class="t" style="right:107.50px;top:528.50px;font-size:13px;line-height:13px;color:#999;">2.0%</div>
<div class="t" style="right:6.50px;top:528.50px;font-size:13px;line-height:13px;color:#999;">25.0</div>
<div class="r" style="left:0px;top:576px;width:1723px;height:53px;background:#fff"></div>
<svg class="r" style="left:663px;top:576px" width="777" height="53"><defs><pattern id="hp5" width="4" height="4" patternUnits="userSpaceOnUse"><path d="M-1 1L1 -1M0 4L4 0M3 5L5 3" stroke="#d2d2d2" stroke-width="1.3"/></pattern></defs><rect width="777" height="53" fill="url(#hp5)"/></svg>
<div class="r" style="left:0px;top:629px;width:1723px;height:1px;background:#f1f1f1"></div>
<div class="r" style="left:159px;top:575px;width:1px;height:54px;background:#dedede"></div>
<div class="r" style="left:360px;top:575px;width:2px;height:54px;background:#d0d2d4"></div>
<div class="r" style="left:542px;top:575px;width:1px;height:54px;background:#dedede"></div>
<div class="r" style="left:663px;top:575px;width:1px;height:54px;background:#dedede"></div>
<div class="r" style="left:734px;top:575px;width:1px;height:54px;background:#dedede"></div>
<div class="r" style="left:855px;top:575px;width:1px;height:54px;background:#dedede"></div>
<div class="r" style="left:946px;top:575px;width:1px;height:54px;background:#dedede"></div>
<div class="r" style="left:1037px;top:575px;width:1px;height:54px;background:#dedede"></div>
<div class="r" style="left:1138px;top:575px;width:1px;height:54px;background:#dedede"></div>
<div class="r" style="left:1289px;top:575px;width:1px;height:54px;background:#dedede"></div>
<div class="r" style="left:1440px;top:575px;width:1px;height:54px;background:#dedede"></div>
<div class="r" style="left:1541px;top:575px;width:1px;height:54px;background:#dedede"></div>
<div class="r" style="left:1622px;top:575px;width:1px;height:54px;background:#dedede"></div>
<div class="t" style="left:-277.70px;width:600px;text-align:center;top:588.99px;font-size:26px;line-height:26px;color:#cfcfcf;">15</div>
<div class="r" style="left:43px;top:593px;width:22px;height:22px;background:#fff;border:3px solid #ececec;border-radius:2px;box-sizing:border-box"></div>
<div class="r" style="left:70px;top:591px;width:25px;height:25px;border-radius:50%;border:1px solid #d2d2d2;box-sizing:border-box"></div>
<svg class="r" style="left:76px;top:597px" width="13" height="13" viewBox="0 0 13 13"><path d="M6.5 0.5L12.5 3.2 6.5 5.9 0.5 3.2z" fill="#63a8d6"/><path d="M0.3 4.2L6 6.8V12.7L0.3 10z" fill="#63a8d6"/><path d="M12.7 4.2L7 6.8V12.7L12.7 10z" fill="#63a8d6"/></svg>
<div class="r" style="left:87px;top:590px;width:10px;height:11px;background:#fff"></div>
<div class="t" style="left:88.60px;top:590.04px;font-size:12px;line-height:12px;color:#63a8d6;font-weight:bold;">4</div>
<svg class="r" style="left:184px;top:583px" width="22" height="20" viewBox="0 0 22 20"><path d="M6.5 1.2c1.8 0 3.5 1.6 4.5 3.6 1-2 2.7-3.6 4.5-3.6 1.5 0 2.5 1 2.5 2.2 0 .9-.5 1.6-1.2 2.1H20.5v4.2H1.5V5.5H4.2C3.5 5 3 4.3 3 3.4 3 2.2 4.3 1.2 6.5 1.2zm0 2c-.9 0-1.4.3-1.4.8s.8 1.3 2.5 1.5H9.6C8.8 4.1 7.6 3.2 6.5 3.2zm9 0c-1.1 0-2.3.9-3.1 2.3h2c1.7-.2 2.5-1 2.5-1.5s-.5-.8-1.4-.8z" fill="#63a8d6"/><rect x="2.8" y="10.8" width="16.4" height="8.2" fill="#63a8d6"/><rect x="10" y="5.5" width="2" height="13.5" fill="#fff"/></svg>
<div class="t" style="left:230.00px;top:583.69px;font-size:11px;line-height:11px;color:#63a8d6;">Google Ads</div>
<div class="t" style="left:230.00px;top:599.69px;font-size:11px;line-height:11px;color:#63a8d6;">05/01/2019 - 05/31/2019</div>
<div class="t" style="left:230.00px;top:615.69px;font-size:11px;line-height:11px;color:#63a8d6;">???</div>
<div class="r" style="left:0px;top:630px;width:1723px;height:53px;background:#fff"></div>
<div class="r" style="left:0px;top:683px;width:1723px;height:1px;background:#f1f1f1"></div>
<div class="r" style="left:159px;top:629px;width:1px;height:54px;background:#dedede"></div>
<div class="r" style="left:360px;top:629px;width:2px;height:54px;background:#d0d2d4"></div>
<div class="r" style="left:542px;top:629px;width:1px;height:54px;background:#dedede"></div>
<div class="r" style="left:663px;top:629px;width:1px;height:54px;background:#dedede"></div>
<div class="r" style="left:734px;top:629px;width:1px;height:54px;background:#dedede"></div>
<div class="r" style="left:855px;top:629px;width:1px;height:54px;background:#dedede"></div>
<div class="r" style="left:946px;top:629px;width:1px;height:54px;background:#dedede"></div>
<div class="r" style="left:1037px;top:629px;width:1px;height:54px;background:#dedede"></div>
<div class="r" style="left:1138px;top:629px;width:1px;height:54px;background:#dedede"></div>
<div class="r" style="left:1289px;top:629px;width:1px;height:54px;background:#dedede"></div>
<div class="r" style="left:1440px;top:629px;width:1px;height:54px;background:#dedede"></div>
<div class="r" style="left:1541px;top:629px;width:1px;height:54px;background:#dedede"></div>
<div class="r" style="left:1622px;top:629px;width:1px;height:54px;background:#dedede"></div>
<div class="t" style="left:-277.70px;width:600px;text-align:center;top:642.99px;font-size:26px;line-height:26px;color:#cfcfcf;">20</div>
<div class="r" style="left:43px;top:647px;width:22px;height:22px;background:#fff;border:3px solid #ececec;border-radius:2px;box-sizing:border-box"></div>
<svg class="r" style="left:172px;top:636px" width="47" height="25" viewBox="0 0 47 25"><rect width="47" height="25" fill="#444546"/>
<path d="M3 19.3V9C3 5.7 5.8 4.1 10.4 4.1S17.8 5.7 17.8 9v10.3h-4.9V9.8c0-1.1-.9-1.7-2.5-1.7s-2.5.6-2.5 1.7v9.5z" fill="#fff"/>
<path d="M22.6 5.8h4.9v9.6c0 2.6-1.7 3.9-4.5 3.9h-2.4v-3.6h.9c.8 0 1.1-.3 1.1-1z" fill="#fff"/>
<circle cx="25.8" cy="5.2" r="1" fill="#b6d433"/>
<text x="30.2" y="9.3" font-family="Liberation Sans" font-weight="bold" font-size="6.2" fill="#fff" textLength="12.5" lengthAdjust="spacingAndGlyphs">com</text>
<rect x="30" y="10.4" width="14" height="0.6" fill="#9bb33a"/>
<text x="30.5" y="15.2" font-family="Liberation Sans" font-size="4.3" fill="#bbb">True</text>
<text x="30.5" y="20.2" font-family="Liberation Sans" font-size="4.3" fill="#bbb" textLength="13" lengthAdjust="spacingAndGlyphs">Jersey</text></svg>
<div class="t" style="left:230.00px;top:637.69px;font-size:11px;line-height:11px;color:#63a8d6;">The Star-Ledger Newa...</div>
<div class="t" style="left:230.00px;top:653.69px;font-size:11px;line-height:11px;color:#63a8d6;">05/01/2019 - 05/31/2019</div>
<div class="t" style="left:230.00px;top:669.69px;font-size:11px;line-height:11px;color:#63a8d6;">$ 579.40</div>
<div class="t" style="left:1044.00px;top:636.50px;font-size:13px;line-height:13px;color:#999;">$</div>
<div class="t" style="right:591.50px;top:636.50px;font-size:13px;line-height:13px;color:#999;">—</div>
<div class="t" style="left:1296.00px;top:636.50px;font-size:13px;line-height:13px;color:#999;">$</div>
<div class="t" style="right:289.50px;top:636.50px;font-size:13px;line-height:13px;color:#63a8d6;">—</div>
<div class="r" style="left:0px;top:684px;width:1723px;height:53px;background:#fff"></div>
<div class="r" style="left:0px;top:737px;width:1723px;height:1px;background:#f1f1f1"></div>
<div class="r" style="left:159px;top:683px;width:1px;height:54px;background:#dedede"></div>
<div class="r" style="left:360px;top:683px;width:2px;height:54px;background:#d0d2d4"></div>
<div class="r" style="left:542px;top:683px;width:1px;height:54px;background:#dedede"></div>
<div class="r" style="left:663px;top:683px;width:1px;height:54px;background:#dedede"></div>
<div class="r" style="left:734px;top:683px;width:1px;height:54px;background:#dedede"></div>
<div class="r" style="left:855px;top:683px;width:1px;height:54px;background:#dedede"></div>
<div class="r" style="left:946px;top:683px;width:1px;height:54px;background:#dedede"></div>
<div class="r" style="left:1037px;top:683px;width:1px;height:54px;background:#dedede"></div>
<div class="r" style="left:1138px;top:683px;width:1px;height:54px;background:#dedede"></div>
<div class="r" style="left:1289px;top:683px;width:1px;height:54px;background:#dedede"></div>
<div class="r" style="left:1440px;top:683px;width:1px;height:54px;background:#dedede"></div>
<div class="r" style="left:1541px;top:683px;width:1px;height:54px;background:#dedede"></div>
<div class="r" style="left:1622px;top:683px;width:1px;height:54px;background:#dedede"></div>
<div class="t" style="left:-277.70px;width:600px;text-align:center;top:696.99px;font-size:26px;line-height:26px;color:#cfcfcf;">21</div>
<div class="r" style="left:43px;top:701px;width:22px;height:22px;background:#fff;border:3px solid #ececec;border-radius:2px;box-sizing:border-box"></div>
<svg class="r" style="left:170px;top:690px" width="50" height="25" viewBox="0 0 50 25"><rect width="50" height="25" fill="#2b2b2b"/>
<defs><clipPath id="wm683"><ellipse cx="25" cy="12.4" rx="22.6" ry="9.8"/></clipPath></defs>
<ellipse cx="25" cy="12.4" rx="22.6" ry="9.8" fill="#e4e4e4"/>
<rect x="36" y="0" width="14" height="25" fill="#2d55a0" clip-path="url(#wm683)"/>
<ellipse cx="25" cy="12.4" rx="22.6" ry="9.8" fill="none" stroke="#b52a35" stroke-width="1.3"/>
<text x="6.5" y="16.4" font-family="Liberation Sans" font-weight="bold" font-size="10.5" fill="#1a1a1a" textLength="29" lengthAdjust="spacingAndGlyphs">WMUR</text>
<text x="37.3" y="17.3" font-family="Liberation Sans" font-weight="bold" font-size="13" fill="#fff" textLength="7" lengthAdjust="spacingAndGlyphs">9</text></svg>
<div class="t" style="left:230.00px;top:691.69px;font-size:11px;line-height:11px;color:#63a8d6;">WMUR TV Manchester...</div>
<div class="t" style="left:230.00px;top:707.69px;font-size:11px;line-height:11px;color:#63a8d6;">05/01/2019 - 05/31/2019</div>
<div class="t" style="left:230.00px;top:723.69px;font-size:11px;line-height:11px;color:#63a8d6;">$ 4,600.00</div>
<div class="t" style="left:368.00px;top:690.50px;font-size:13px;line-height:13px;color:#333;">Boston (Manchester)</div>
<div class="t" style="left:458.00px;top:718.19px;font-size:11px;line-height:11px;color:#999;">Any Age</div>
<div class="t" style="right:1066.50px;top:690.50px;font-size:13px;line-height:13px;color:#333;">5,958,222</div>
<div class="t" style="right:995.50px;top:690.50px;font-size:13px;line-height:13px;color:#333;">1.0</div>
<div class="t" style="right:874.50px;top:690.50px;font-size:13px;line-height:13px;color:#999;">59,582</div>
<div class="t" style="right:783.50px;top:690.50px;font-size:13px;line-height:13px;color:#999;">20</div>
<div class="t" style="right:692.50px;top:690.50px;font-size:13px;line-height:13px;color:#999;">20.0</div>
<div class="t" style="left:1044.00px;top:690.50px;font-size:13px;line-height:13px;color:#999;">$</div>
<div class="t" style="right:591.50px;top:690.50px;font-size:13px;line-height:13px;color:#999;">200.00</div>
<div class="t" style="right:440.50px;top:690.50px;font-size:13px;line-height:13px;color:#333;">555,222</div>
<svg class="r" style="left:1281px;top:684px" width="8" height="8" viewBox="0 0 8 8"><path d="M0 0h8v8z" fill="#5aa5d6"/></svg>
<div class="t" style="left:1296.00px;top:690.50px;font-size:13px;line-height:13px;color:#999;">$</div>
<div class="t" style="right:289.50px;top:690.50px;font-size:13px;line-height:13px;color:#63a8d6;">7.20</div>
<div class="t" style="right:188.50px;top:690.50px;font-size:13px;line-height:13px;color:#333;">1,084,396</div>
<div class="t" style="right:107.50px;top:690.50px;font-size:13px;line-height:13px;color:#999;">18.2%</div>
<div class="t" style="right:6.50px;top:690.50px;font-size:13px;line-height:13px;color:#999;">0.5</div>
<div class="r" style="left:0px;top:738px;width:1723px;height:53px;background:#fff"></div>
<div class="r" style="left:0px;top:791px;width:1723px;height:1px;background:#f1f1f1"></div>
<div class="r" style="left:159px;top:737px;width:1px;height:54px;background:#dedede"></div>
<div class="r" style="left:360px;top:737px;width:2px;height:54px;background:#d0d2d4"></div>
<div class="r" style="left:542px;top:737px;width:1px;height:54px;background:#dedede"></div>
<div class="r" style="left:663px;top:737px;width:1px;height:54px;background:#dedede"></div>
<div class="r" style="left:734px;top:737px;width:1px;height:54px;background:#dedede"></div>
<div class="r" style="left:855px;top:737px;width:1px;height:54px;background:#dedede"></div>
<div class="r" style="left:946px;top:737px;width:1px;height:54px;background:#dedede"></div>
<div class="r" style="left:1037px;top:737px;width:1px;height:54px;background:#dedede"></div>
<div class="r" style="left:1138px;top:737px;width:1px;height:54px;background:#dedede"></div>
<div class="r" style="left:1289px;top:737px;width:1px;height:54px;background:#dedede"></div>
<div class="r" style="left:1440px;top:737px;width:1px;height:54px;background:#dedede"></div>
<div class="r" style="left:1541px;top:737px;width:1px;height:54px;background:#dedede"></div>
<div class="r" style="left:1622px;top:737px;width:1px;height:54px;background:#dedede"></div>
<div class="t" style="left:-277.70px;width:600px;text-align:center;top:750.99px;font-size:26px;line-height:26px;color:#cfcfcf;">22</div>
<div class="r" style="left:43px;top:755px;width:22px;height:22px;background:#fff;border:3px solid #ececec;border-radius:2px;box-sizing:border-box"></div>
<svg class="r" style="left:166px;top:745px" width="58" height="22" viewBox="0 0 58 22">
<text x="0.5" y="16" font-family="Liberation Serif" font-weight="bold" font-size="16.5" fill="#c4343c" textLength="56.5" lengthAdjust="spacingAndGlyphs">Southern Living</text></svg>
<div class="t" style="left:230.00px;top:745.69px;font-size:11px;line-height:11px;color:#63a8d6;">Southern Living</div>
<div class="t" style="left:230.00px;top:761.69px;font-size:11px;line-height:11px;color:#63a8d6;">05/01/2019 - 05/31/2019</div>
<div class="t" style="left:230.00px;top:777.69px;font-size:11px;line-height:11px;color:#63a8d6;">$ 4,617.60</div>
<div class="t" style="left:1044.00px;top:744.50px;font-size:13px;line-height:13px;color:#999;">$</div>
<div class="t" style="right:591.50px;top:744.50px;font-size:13px;line-height:13px;color:#999;">—</div>
<div class="t" style="left:1296.00px;top:744.50px;font-size:13px;line-height:13px;color:#999;">$</div>
<div class="t" style="right:289.50px;top:744.50px;font-size:13px;line-height:13px;color:#63a8d6;">—</div>
<div class="r" style="left:0px;top:792px;width:1723px;height:53px;background:#fff"></div>
<div class="r" style="left:0px;top:845px;width:1723px;height:1px;background:#f1f1f1"></div>
<div class="r" style="left:159px;top:791px;width:1px;height:54px;background:#dedede"></div>
<div class="r" style="left:360px;top:791px;width:2px;height:54px;background:#d0d2d4"></div>
<div class="r" style="left:542px;top:791px;width:1px;height:54px;background:#dedede"></div>
<div class="r" style="left:663px;top:791px;width:1px;height:54px;background:#dedede"></div>
<div class="r" style="left:734px;top:791px;width:1px;height:54px;background:#dedede"></div>
<div class="r" style="left:855px;top:791px;width:1px;height:54px;background:#dedede"></div>
<div class="r" style="left:946px;top:791px;width:1px;height:54px;background:#dedede"></div>
<div class="r" style="left:1037px;top:791px;width:1px;height:54px;background:#dedede"></div>
<div class="r" style="left:1138px;top:791px;width:1px;height:54px;background:#dedede"></div>
<div class="r" style="left:1289px;top:791px;width:1px;height:54px;background:#dedede"></div>
<div class="r" style="left:1440px;top:791px;width:1px;height:54px;background:#dedede"></div>
<div class="r" style="left:1541px;top:791px;width:1px;height:54px;background:#dedede"></div>
<div class="r" style="left:1622px;top:791px;width:1px;height:54px;background:#dedede"></div>
<div class="t" style="left:-277.70px;width:600px;text-align:center;top:804.99px;font-size:26px;line-height:26px;color:#cfcfcf;">23</div>
<div class="r" style="left:43px;top:809px;width:22px;height:22px;background:#fff;border:3px solid #ececec;border-radius:2px;box-sizing:border-box"></div>
<div class="r" style="left:102.5px;top:807.3px;width:25px;height:25px;border-radius:50%;border:1px solid #d2d2d2;box-sizing:border-box"></div>
<svg class="r" style="left:108.9px;top:812.9px" width="12.2" height="12.6" viewBox="0 0 14 15"><path d="M7 0.2c.7 0 1.1.8 1.1 1.8v3.5l5.8 3.3v1.5l-5.8-1.6v3.2l1.6 1.2v1.2L7 13.6l-2.7.7v-1.2l1.6-1.2V8.7L0.1 10.3V8.8l5.8-3.3V2c0-1 .4-1.8 1.1-1.8z" fill="#63a8d6"/></svg>
<div class="r" style="left:119.5px;top:806.3px;width:10px;height:11px;background:#fff"></div>
<div class="t" style="left:121.10px;top:806.34px;font-size:12px;line-height:12px;color:#63a8d6;font-weight:bold;">7</div>
<svg class="r" style="left:168px;top:798px" width="55" height="25" viewBox="0 0 55 25"><rect width="55" height="25" fill="#efedee"/>
<text x="3" y="10.4" font-family="Liberation Sans" font-weight="bold" font-style="italic" font-size="14" fill="#e0141e" textLength="24.5" lengthAdjust="spacingAndGlyphs">1510</text>
<text x="3.5" y="13" font-family="Liberation Sans" font-weight="bold" font-size="2.4" fill="#e0141e" opacity="0.6" textLength="22" lengthAdjust="spacingAndGlyphs">SPOKANE</text>
<text x="27.3" y="14" font-family="Liberation Sans" font-weight="bold" font-style="italic" font-size="14.5" fill="#d9141f" textLength="27" lengthAdjust="spacingAndGlyphs">KGA</text>
<path d="M3.5 15h51l-0.3 1.3h-51z" fill="#1f4e99"/>
<text x="1" y="22.3" font-family="Liberation Sans" font-weight="bold" font-style="italic" font-size="7.2" fill="#1d4a96" textLength="51" lengthAdjust="spacingAndGlyphs">NW SPORTS TALK</text>
<path d="M1 23.3h49l-0.4 1.3h-49z" fill="#1f4e99"/></svg>
<div class="t" style="left:230.00px;top:799.69px;font-size:11px;line-height:11px;color:#63a8d6;">1510 AM KGA Spokan...</div>
<div class="t" style="left:230.00px;top:815.69px;font-size:11px;line-height:11px;color:#63a8d6;">05/05/2019 - 05/11/2019</div>
<div class="t" style="left:230.00px;top:831.69px;font-size:11px;line-height:11px;color:#63a8d6;">$ 1,319.63</div>
<div class="t" style="left:368.00px;top:798.50px;font-size:13px;line-height:13px;color:#333;">Spokane</div>
<div class="t" style="left:368.00px;top:826.19px;font-size:11px;line-height:11px;color:#999;">All Persons</div>
<div class="t" style="left:458.00px;top:826.19px;font-size:11px;line-height:11px;color:#999;">25 - 49</div>
<div class="t" style="right:1066.50px;top:798.50px;font-size:13px;line-height:13px;color:#333;">1,015,350</div>
<div class="t" style="right:995.50px;top:798.50px;font-size:13px;line-height:13px;color:#333;">1.0</div>
<div class="t" style="right:874.50px;top:798.50px;font-size:13px;line-height:13px;color:#999;">10,154</div>
<div class="t" style="right:783.50px;top:798.50px;font-size:13px;line-height:13px;color:#999;">18</div>
<div class="t" style="right:692.50px;top:798.50px;font-size:13px;line-height:13px;color:#999;">18.0</div>
<div class="t" style="left:1044.00px;top:798.50px;font-size:13px;line-height:13px;color:#999;">$</div>
<div class="t" style="right:591.50px;top:798.50px;font-size:13px;line-height:13px;color:#999;">75.00</div>
<div class="t" style="right:440.50px;top:798.50px;font-size:13px;line-height:13px;color:#999;">182,772</div>
<div class="t" style="left:1296.00px;top:798.50px;font-size:13px;line-height:13px;color:#999;">$</div>
<div class="t" style="right:289.50px;top:798.50px;font-size:13px;line-height:13px;color:#63a8d6;">6.28</div>
<div class="t" style="right:188.50px;top:798.50px;font-size:13px;line-height:13px;color:#999;">177,687</div>
<div class="t" style="right:107.50px;top:798.50px;font-size:13px;line-height:13px;color:#999;">17.5%</div>
<div class="t" style="right:6.50px;top:798.50px;font-size:13px;line-height:13px;color:#999;">1.0</div>
<div class="r" style="left:0px;top:846px;width:1723px;height:53px;background:#fff"></div>
<div class="r" style="left:0px;top:899px;width:1723px;height:1px;background:#f1f1f1"></div>
<div class="r" style="left:159px;top:845px;width:1px;height:54px;background:#dedede"></div>
<div class="r" style="left:360px;top:845px;width:2px;height:54px;background:#d0d2d4"></div>
<div class="r" style="left:542px;top:845px;width:1px;height:54px;background:#dedede"></div>
<div class="r" style="left:663px;top:845px;width:1px;height:54px;background:#dedede"></div>
<div class="r" style="left:734px;top:845px;width:1px;height:54px;background:#dedede"></div>
<div class="r" style="left:855px;top:845px;width:1px;height:54px;background:#dedede"></div>
<div class="r" style="left:946px;top:845px;width:1px;height:54px;background:#dedede"></div>
<div class="r" style="left:1037px;top:845px;width:1px;height:54px;background:#dedede"></div>
<div class="r" style="left:1138px;top:845px;width:1px;height:54px;background:#dedede"></div>
<div class="r" style="left:1289px;top:845px;width:1px;height:54px;background:#dedede"></div>
<div class="r" style="left:1440px;top:845px;width:1px;height:54px;background:#dedede"></div>
<div class="r" style="left:1541px;top:845px;width:1px;height:54px;background:#dedede"></div>
<div class="r" style="left:1622px;top:845px;width:1px;height:54px;background:#dedede"></div>
<div class="t" style="left:-277.70px;width:600px;text-align:center;top:858.99px;font-size:26px;line-height:26px;color:#cfcfcf;">31</div>
<div class="r" style="left:43px;top:863px;width:22px;height:22px;background:#fff;border:3px solid #ececec;border-radius:2px;box-sizing:border-box"></div>
<svg class="r" style="left:165px;top:853px" width="60" height="22" viewBox="0 0 60 22">
<text x="1" y="16.2" font-family="Liberation Serif" font-size="17.5" fill="#e52d36" textLength="57" lengthAdjust="spacingAndGlyphs" stroke="#e52d36" stroke-width="0.3">CookingLight</text></svg>
<div class="t" style="left:230.00px;top:853.69px;font-size:11px;line-height:11px;color:#63a8d6;">Cooking Light</div>
<div class="t" style="left:230.00px;top:869.69px;font-size:11px;line-height:11px;color:#63a8d6;">05/01/2019 - 05/31/2019</div>
<div class="t" style="left:230.00px;top:885.69px;font-size:11px;line-height:11px;color:#63a8d6;">$ 2,777.60</div>
<div class="t" style="left:368.00px;top:852.50px;font-size:13px;line-height:13px;color:#333;">New Hampshire</div>
<div class="t" style="left:368.00px;top:880.19px;font-size:11px;line-height:11px;color:#999;">All Persons</div>
<div class="t" style="left:458.00px;top:880.19px;font-size:11px;line-height:11px;color:#999;">Any Age</div>
<div class="t" style="right:1066.50px;top:852.50px;font-size:13px;line-height:13px;color:#333;">1,334,795</div>
<div class="t" style="left:1044.00px;top:852.50px;font-size:13px;line-height:13px;color:#999;">$</div>
<div class="t" style="right:591.50px;top:852.50px;font-size:13px;line-height:13px;color:#999;">—</div>
<div class="t" style="left:1296.00px;top:852.50px;font-size:13px;line-height:13px;color:#999;">$</div>
<div class="t" style="right:289.50px;top:852.50px;font-size:13px;line-height:13px;color:#63a8d6;">—</div>
<div class="t" style="right:188.50px;top:852.50px;font-size:13px;line-height:13px;color:#333;">300,000</div>
<svg class="r" style="left:1533px;top:846px" width="8" height="8" viewBox="0 0 8 8"><path d="M0 0h8v8z" fill="#5aa5d6"/></svg>
<div class="t" style="right:107.50px;top:852.50px;font-size:13px;line-height:13px;color:#999;">22.5%</div>
<div class="r" style="left:0px;top:900px;width:1723px;height:53px;background:#fff"></div>
<div class="r" style="left:0px;top:953px;width:1723px;height:1px;background:#f1f1f1"></div>
<div class="r" style="left:159px;top:899px;width:1px;height:54px;background:#dedede"></div>
<div class="r" style="left:360px;top:899px;width:2px;height:54px;background:#d0d2d4"></div>
<div class="r" style="left:542px;top:899px;width:1px;height:54px;background:#dedede"></div>
<div class="r" style="left:663px;top:899px;width:1px;height:54px;background:#dedede"></div>
<div class="r" style="left:734px;top:899px;width:1px;height:54px;background:#dedede"></div>
<div class="r" style="left:855px;top:899px;width:1px;height:54px;background:#dedede"></div>
<div class="r" style="left:946px;top:899px;width:1px;height:54px;background:#dedede"></div>
<div class="r" style="left:1037px;top:899px;width:1px;height:54px;background:#dedede"></div>
<div class="r" style="left:1138px;top:899px;width:1px;height:54px;background:#dedede"></div>
<div class="r" style="left:1289px;top:899px;width:1px;height:54px;background:#dedede"></div>
<div class="r" style="left:1440px;top:899px;width:1px;height:54px;background:#dedede"></div>
<div class="r" style="left:1541px;top:899px;width:1px;height:54px;background:#dedede"></div>
<div class="r" style="left:1622px;top:899px;width:1px;height:54px;background:#dedede"></div>
<div class="t" style="left:-277.70px;width:600px;text-align:center;top:912.99px;font-size:26px;line-height:26px;color:#cfcfcf;">32</div>
<div class="r" style="left:43px;top:917px;width:22px;height:22px;background:#fff;border:3px solid #ececec;border-radius:2px;box-sizing:border-box"></div>
<svg class="r" style="left:184px;top:906px" width="23" height="25" viewBox="0 0 23 25"><rect width="23" height="25" fill="#f6f7f8"/>
<path d="M9.4 3.6L4.6 13.6" stroke="#fbbc04" stroke-width="6.4"/>
<path d="M11.9 2.4L18.5 15.2" stroke="#3c89d8" stroke-width="6.6" stroke-linecap="round"/>
<circle cx="5.4" cy="15.1" r="3.3" fill="#2fa84f"/>
<text x="1.5" y="23.5" font-family="Liberation Sans" font-size="4.2" fill="#666" textLength="20" lengthAdjust="spacingAndGlyphs">Google Ads</text></svg>
<div class="t" style="left:230.00px;top:907.69px;font-size:11px;line-height:11px;color:#63a8d6;">Google Ads</div>
<div class="t" style="left:230.00px;top:923.69px;font-size:11px;line-height:11px;color:#63a8d6;">05/01/2019 - 06/30/2019</div>
<div class="t" style="left:230.00px;top:939.69px;font-size:11px;line-height:11px;color:#63a8d6;">$ 11,500.00</div>
<div class="t" style="left:368.00px;top:906.50px;font-size:13px;line-height:13px;color:#333;">New Hampshire</div>
<div class="t" style="left:368.00px;top:934.19px;font-size:11px;line-height:11px;color:#999;">All Persons</div>
<div class="t" style="left:458.00px;top:934.19px;font-size:11px;line-height:11px;color:#999;">Any Age</div>
<div class="t" style="right:1066.50px;top:906.50px;font-size:13px;line-height:13px;color:#333;">1,334,795</div>
<div class="t" style="right:995.50px;top:906.50px;font-size:13px;line-height:13px;color:#333;">1.2</div>
<div class="t" style="right:874.50px;top:906.50px;font-size:13px;line-height:13px;color:#999;">16,018</div>
<div class="t" style="right:783.50px;top:906.50px;font-size:13px;line-height:13px;color:#333;">10</div>
<div class="t" style="right:692.50px;top:906.50px;font-size:13px;line-height:13px;color:#999;">12.0</div>
<div class="t" style="left:1044.00px;top:906.50px;font-size:13px;line-height:13px;color:#999;">$</div>
<div class="t" style="right:591.50px;top:906.50px;font-size:13px;line-height:13px;color:#999;">833.33</div>
<div class="t" style="right:440.50px;top:906.50px;font-size:13px;line-height:13px;color:#333;">160,180</div>
<div class="t" style="left:1296.00px;top:906.50px;font-size:13px;line-height:13px;color:#999;">$</div>
<div class="t" style="right:289.50px;top:906.50px;font-size:13px;line-height:13px;color:#63a8d6;">62.43</div>
<div class="t" style="right:188.50px;top:906.50px;font-size:13px;line-height:13px;color:#333;">300,000</div>
<svg class="r" style="left:1533px;top:900px" width="8" height="8" viewBox="0 0 8 8"><path d="M0 0h8v8z" fill="#5aa5d6"/></svg>
<div class="t" style="right:107.50px;top:906.50px;font-size:13px;line-height:13px;color:#999;">22.5%</div>
<div class="t" style="right:6.50px;top:906.50px;font-size:13px;line-height:13px;color:#999;">0.5</div>
<div class="r" style="left:0px;top:954px;width:1723px;height:53px;background:#fff"></div>
<div class="r" style="left:0px;top:1007px;width:1723px;height:1px;background:#f1f1f1"></div>
<div class="r" style="left:159px;top:953px;width:1px;height:54px;background:#dedede"></div>
<div class="r" style="left:360px;top:953px;width:2px;height:54px;background:#d0d2d4"></div>
<div class="r" style="left:542px;top:953px;width:1px;height:54px;background:#dedede"></div>
<div class="r" style="left:663px;top:953px;width:1px;height:54px;background:#dedede"></div>
<div class="r" style="left:734px;top:953px;width:1px;height:54px;background:#dedede"></div>
<div class="r" style="left:855px;top:953px;width:1px;height:54px;background:#dedede"></div>
<div class="r" style="left:946px;top:953px;width:1px;height:54px;background:#dedede"></div>
<div class="r" style="left:1037px;top:953px;width:1px;height:54px;background:#dedede"></div>
<div class="r" style="left:1138px;top:953px;width:1px;height:54px;background:#dedede"></div>
<div class="r" style="left:1289px;top:953px;width:1px;height:54px;background:#dedede"></div>
<div class="r" style="left:1440px;top:953px;width:1px;height:54px;background:#dedede"></div>
<div class="r" style="left:1541px;top:953px;width:1px;height:54px;background:#dedede"></div>
<div class="r" style="left:1622px;top:953px;width:1px;height:54px;background:#dedede"></div>
<div class="t" style="left:-277.70px;width:600px;text-align:center;top:966.99px;font-size:26px;line-height:26px;color:#cfcfcf;">33</div>
<div class="r" style="left:43px;top:971px;width:22px;height:22px;background:#fff;border:3px solid #ececec;border-radius:2px;box-sizing:border-box"></div>
<svg class="r" style="left:183px;top:959px" width="25" height="25" viewBox="0 0 25 25"><rect width="25" height="25" rx="1.5" fill="#3b5a9a"/>
<path d="M13.2 25V14.5h-3v-3.6h3V8.2c0-3 1.8-4.6 4.5-4.6 1.3 0 2.4.1 2.7.1V7h-1.8c-1.5 0-1.8.7-1.8 1.7v2.2h3.5l-.5 3.6h-3V25z" fill="#fff"/>
<rect x="2" y="20" width="21" height="3" fill="#6d86b8" opacity=".8"/></svg>
<div class="t" style="left:230.00px;top:961.69px;font-size:11px;line-height:11px;color:#63a8d6;">Facebook</div>
<div class="t" style="left:230.00px;top:977.69px;font-size:11px;line-height:11px;color:#63a8d6;">05/01/2019 - 05/31/2019</div>
<div class="t" style="left:230.00px;top:993.69px;font-size:11px;line-height:11px;color:#63a8d6;">$ 5,739.65</div>
<div class="t" style="left:368.00px;top:960.50px;font-size:13px;line-height:13px;color:#333;">San Diego</div>
<div class="t" style="left:368.00px;top:988.19px;font-size:11px;line-height:11px;color:#999;">All Persons</div>
<div class="t" style="left:458.00px;top:988.19px;font-size:11px;line-height:11px;color:#999;">25 - 54</div>
<div class="t" style="right:1066.50px;top:960.50px;font-size:13px;line-height:13px;color:#333;">500,000</div>
<div class="t" style="right:995.50px;top:960.50px;font-size:13px;line-height:13px;color:#333;">0.5</div>
<div class="t" style="right:874.50px;top:960.50px;font-size:13px;line-height:13px;color:#999;">2,500</div>
<div class="t" style="right:783.50px;top:960.50px;font-size:13px;line-height:13px;color:#333;">100</div>
<div class="t" style="right:692.50px;top:960.50px;font-size:13px;line-height:13px;color:#999;">50.0</div>
<div class="t" style="left:1044.00px;top:960.50px;font-size:13px;line-height:13px;color:#999;">$</div>
<div class="t" style="right:591.50px;top:960.50px;font-size:13px;line-height:13px;color:#999;">99.82</div>
<div class="t" style="right:440.50px;top:960.50px;font-size:13px;line-height:13px;color:#333;">250,000</div>
<div class="t" style="left:1296.00px;top:960.50px;font-size:13px;line-height:13px;color:#999;">$</div>
<div class="t" style="right:289.50px;top:960.50px;font-size:13px;line-height:13px;color:#63a8d6;">19.96</div>
<div class="t" style="right:188.50px;top:960.50px;font-size:13px;line-height:13px;color:#333;">197,000</div>
<div class="t" style="right:107.50px;top:960.50px;font-size:13px;line-height:13px;color:#999;">39.4%</div>
<div class="t" style="right:6.50px;top:960.50px;font-size:13px;line-height:13px;color:#999;">1.3</div>
<div class="r" style="left:0px;top:1008px;width:1723px;height:53px;background:#fff"></div>
<div class="r" style="left:0px;top:1061px;width:1723px;height:1px;background:#f1f1f1"></div>
<div class="r" style="left:159px;top:1007px;width:1px;height:54px;background:#dedede"></div>
<div class="r" style="left:360px;top:1007px;width:2px;height:54px;background:#d0d2d4"></div>
<div class="r" style="left:542px;top:1007px;width:1px;height:54px;background:#dedede"></div>
<div class="r" style="left:663px;top:1007px;width:1px;height:54px;background:#dedede"></div>
<div class="r" style="left:734px;top:1007px;width:1px;height:54px;background:#dedede"></div>
<div class="r" style="left:855px;top:1007px;width:1px;height:54px;background:#dedede"></div>
<div class="r" style="left:946px;top:1007px;width:1px;height:54px;background:#dedede"></div>
<div class="r" style="left:1037px;top:1007px;width:1px;height:54px;background:#dedede"></div>
<div class="r" style="left:1138px;top:1007px;width:1px;height:54px;background:#dedede"></div>
<div class="r" style="left:1289px;top:1007px;width:1px;height:54px;background:#dedede"></div>
<div class="r" style="left:1440px;top:1007px;width:1px;height:54px;background:#dedede"></div>
<div class="r" style="left:1541px;top:1007px;width:1px;height:54px;background:#dedede"></div>
<div class="r" style="left:1622px;top:1007px;width:1px;height:54px;background:#dedede"></div>
<div class="t" style="left:-277.70px;width:600px;text-align:center;top:1020.99px;font-size:26px;line-height:26px;color:#cfcfcf;">34</div>
<div class="r" style="left:43px;top:1025px;width:22px;height:22px;background:#fff;border:3px solid #ececec;border-radius:2px;box-sizing:border-box"></div>
<svg class="r" style="left:166px;top:1019px" width="58" height="20" viewBox="0 0 58 20">
<text x="0.5" y="14.4" font-family="Liberation Serif" font-weight="bold" font-size="17" fill="#151515" textLength="56.5" lengthAdjust="spacingAndGlyphs">Pittsburgh Post-Gazette</text></svg>
<div class="t" style="left:230.00px;top:1015.69px;font-size:11px;line-height:11px;color:#63a8d6;">Pittsburgh Post-Gazett...</div>
<div class="t" style="left:230.00px;top:1031.69px;font-size:11px;line-height:11px;color:#63a8d6;">05/01/2019 - 05/31/2019</div>
<div class="t" style="left:230.00px;top:1047.69px;font-size:11px;line-height:11px;color:#63a8d6;">$ 2,745.00</div>
<div class="t" style="left:368.00px;top:1014.50px;font-size:13px;line-height:13px;color:#333;">Raleigh/Durham-9528</div>
<div class="t" style="left:368.00px;top:1042.19px;font-size:11px;line-height:11px;color:#999;">All Persons</div>
<div class="t" style="left:458.00px;top:1042.19px;font-size:11px;line-height:11px;color:#999;">Any Age</div>
<div class="t" style="right:1066.50px;top:1014.50px;font-size:13px;line-height:13px;color:#333;">0</div>
<div class="t" style="right:995.50px;top:1014.50px;font-size:13px;line-height:13px;color:#333;">0.5</div>
<div class="t" style="right:874.50px;top:1014.50px;font-size:13px;line-height:13px;color:#999;">0</div>
<div class="t" style="left:1044.00px;top:1014.50px;font-size:13px;line-height:13px;color:#999;">$</div>
<div class="t" style="right:591.50px;top:1014.50px;font-size:13px;line-height:13px;color:#999;">—</div>
<div class="t" style="right:440.50px;top:1014.50px;font-size:13px;line-height:13px;color:#333;">500,000</div>
<svg class="r" style="left:1281px;top:1008px" width="8" height="8" viewBox="0 0 8 8"><path d="M0 0h8v8z" fill="#5aa5d6"/></svg>
<div class="t" style="left:1296.00px;top:1014.50px;font-size:13px;line-height:13px;color:#999;">$</div>
<div class="t" style="right:289.50px;top:1014.50px;font-size:13px;line-height:13px;color:#63a8d6;">4.60</div>
<div class="t" style="right:188.50px;top:1014.50px;font-size:13px;line-height:13px;color:#333;">25,000</div>
<svg class="r" style="left:1533px;top:1008px" width="8" height="8" viewBox="0 0 8 8"><path d="M0 0h8v8z" fill="#5aa5d6"/></svg>
<div class="t" style="right:6.50px;top:1014.50px;font-size:13px;line-height:13px;color:#999;">20.0</div>
<svg class="r" style="left:0;top:0" width="1723" height="1062"><defs><filter id="sh" x="-20%" y="-20%" width="140%" height="140%"><feGaussianBlur in="SourceAlpha" stdDeviation="2.2"/><feOffset dx="1.5" dy="3" result="b"/><feComponentTransfer><feFuncA type="linear" slope="0.55"/></feComponentTransfer><feMerge><feMergeNode/><feMergeNode in="SourceGraphic"/></feMerge></filter></defs><g filter="url(#sh)"><line x1="579.0" y1="254.5" x2="517.7" y2="299.9" stroke="#ea3323" stroke-width="5.5" stroke-linecap="round"/><path d="M504.0 310.0 L514.7 290.9 L525.4 305.3z" fill="#ea3323"/><line x1="412.5" y1="439.0" x2="400.3" y2="378.2" stroke="#ea3323" stroke-width="5.5" stroke-linecap="round"/><path d="M397.0 361.5 L409.7 379.3 L392.1 382.9z" fill="#ea3323"/><line x1="514.0" y1="425.0" x2="485.6" y2="376.2" stroke="#ea3323" stroke-width="5.5" stroke-linecap="round"/><path d="M477.0 361.5 L494.8 374.2 L479.3 383.3z" fill="#ea3323"/><line x1="623.0" y1="396.0" x2="623.0" y2="352.0" stroke="#ea3323" stroke-width="5.5" stroke-linecap="round"/><path d="M623.0 335.0 L632.0 355.0 L614.0 355.0z" fill="#ea3323"/><line x1="801.0" y1="249.0" x2="747.0" y2="294.5" stroke="#ea3323" stroke-width="5.5" stroke-linecap="round"/><path d="M734.0 305.5 L743.5 285.7 L755.1 299.5z" fill="#ea3323"/></g></svg>
<div class="r" style="left:582.1px;top:221.9px;width:42px;height:43.0px;border-radius:50%;background:#ea3323"></div>
<div class="t" style="left:303.10px;width:600px;text-align:center;top:230.88px;font-size:24px;line-height:24px;color:#fff;">1</div>
<div class="r" style="left:397.0px;top:450.7px;width:39.0px;height:41.0px;border-radius:50%;background:#ea3323"></div>
<div class="t" style="left:116.50px;width:600px;text-align:center;top:458.68px;font-size:24px;line-height:24px;color:#fff;">2</div>
<div class="r" style="left:509.9px;top:426.9px;width:39.0px;height:42px;border-radius:50%;background:#ea3323"></div>
<div class="t" style="left:229.40px;width:600px;text-align:center;top:435.38px;font-size:24px;line-height:24px;color:#fff;">3</div>
<div class="r" style="left:603.0px;top:407.3px;width:41.0px;height:42px;border-radius:50%;background:#ea3323"></div>
<div class="t" style="left:323.50px;width:600px;text-align:center;top:415.78px;font-size:24px;line-height:24px;color:#fff;">4</div>
<div class="r" style="left:799.9px;top:215.9px;width:42px;height:42px;border-radius:50%;background:#ea3323"></div>
<div class="t" style="left:520.90px;width:600px;text-align:center;top:224.38px;font-size:24px;line-height:24px;color:#fff;">5</div>
</body></html>
